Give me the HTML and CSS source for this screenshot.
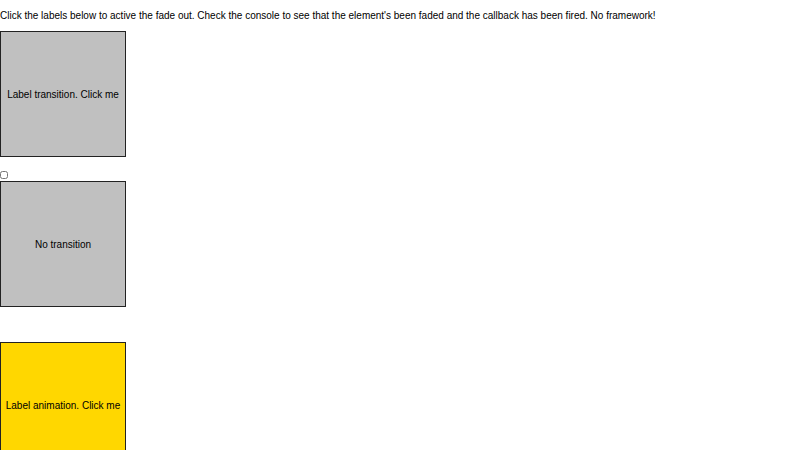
FILE: index.html
```html
<!DOCTYPE html>
<html>
<head>
<meta charset="utf-8">
<link rel="stylesheet" href="styles.css">
</head>
<body>
<p class="intro">Click the labels below to active the fade out. Check the console to see that the element's been faded and the callback has been fired. No framework!</p>
<label class="box grey first" for="t1">Label transition. Click me</label>
<input class="check" type="checkbox" id="t1">
<div class="box grey second">No transition</div>
<label class="box gold third">Label animation. Click me</label>
</body>
</html>
```

FILE: styles.css
```css
html, body {
  margin: 0;
  padding: 0;
  background: #fff;
}
body {
  font-family: "Liberation Sans", Arial, sans-serif;
  font-size: 10px;
  color: #000;
  overflow: hidden;
  height: 450px;
}
.intro {
  margin: 0;
  padding: 10px 0 0;
  line-height: 12px;
  height: 21px;
}
.box {
  display: flex;
  align-items: center;
  justify-content: center;
  box-sizing: border-box;
  width: 126px;
  height: 126px;
  padding-top: 2px;
  border: 1px solid #222;
  text-align: center;
  line-height: 12px;
}
.grey {
  background: #c0c0c0;
}
.gold {
  background: #ffd700;
}
.check {
  display: block;
  margin: 14px 0 2px;
  width: 8px;
  height: 8px;
}
.third {
  margin-top: 35px;
}
```
